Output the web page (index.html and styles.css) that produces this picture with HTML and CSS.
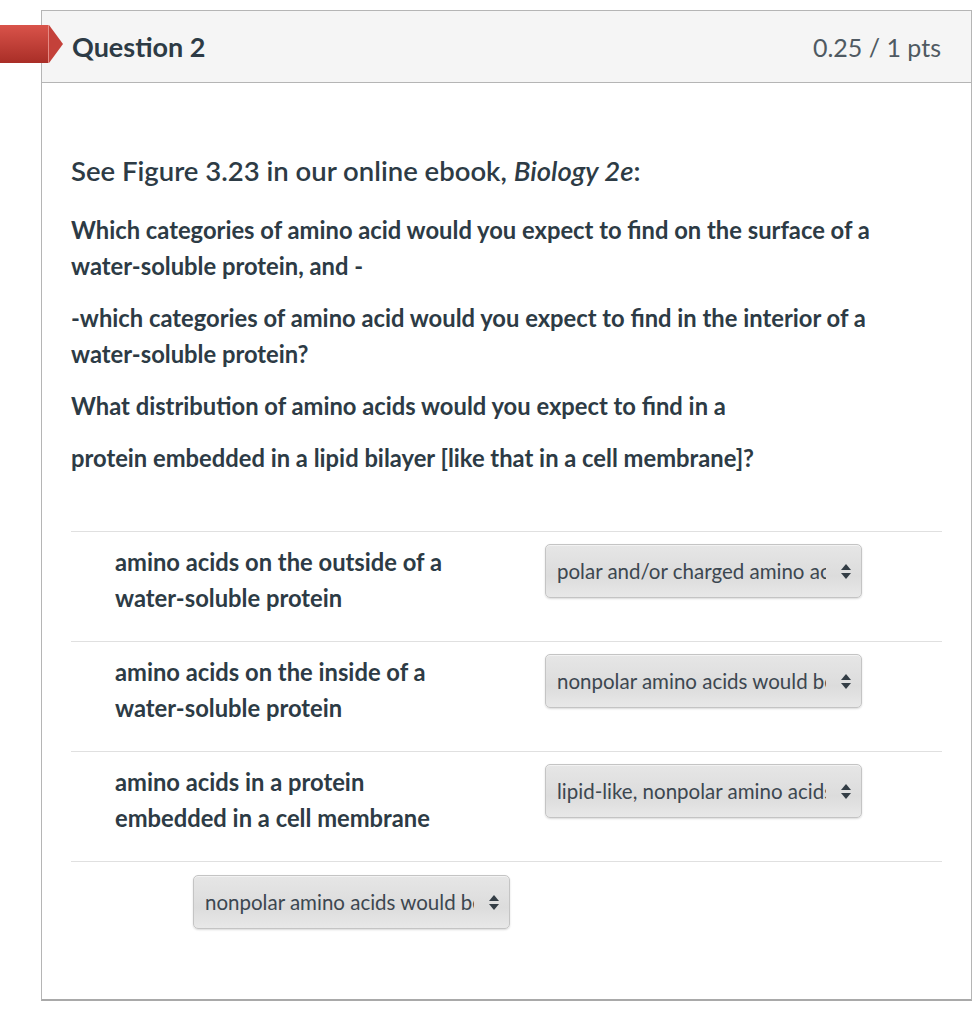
FILE: index.html
```html
<!DOCTYPE html>
<html>
<head>
<meta charset="utf-8">
<link rel="stylesheet" href="styles.css">
</head>
<body>
<div class="page">
  <div class="question">
    <div class="flag"><span class="flag-tip"></span></div>
    <div class="header">
      <span class="title">Question 2</span>
      <span class="points">0.25 / 1 pts</span>
    </div>
    <div class="body">
      <p class="intro">See Figure 3.23 in our online ebook, <em>Biology 2e</em>:</p>
      <p>Which categories of amino acid would you expect to find on the surface of a water-soluble protein, and -</p>
      <p>-which categories of amino acid would you expect to find in the interior of a water-soluble protein?</p>
      <p>What distribution of amino acids would you expect to find in a</p>
      <p>protein embedded in a lipid bilayer [like that in a cell membrane]?</p>

      <div class="matches">
        <div class="match">
          <div class="label">amino acids on the outside of a water-soluble protein</div>
          <div class="select"><span class="sel-text">polar and/or charged amino acids</span><span class="arrows"></span></div>
        </div>
        <div class="match">
          <div class="label">amino acids on the inside of a water-soluble protein</div>
          <div class="select"><span class="sel-text">nonpolar amino acids would be</span><span class="arrows"></span></div>
        </div>
        <div class="match">
          <div class="label">amino acids in a protein embedded in a cell membrane</div>
          <div class="select"><span class="sel-text">lipid-like, nonpolar amino acids</span><span class="arrows"></span></div>
        </div>
      </div>
      <div class="extra">
        <div class="select"><span class="sel-text">nonpolar amino acids would be</span><span class="arrows"></span></div>
      </div>
    </div>
  </div>
</div>
</body>
</html>
```

FILE: styles.css
```css
* { box-sizing: border-box; }
body {
  margin: 0;
  background: #fff;
  font-family: Lato, "Open Sans", sans-serif;
  color: #2d3b45;
}
.page {
  padding: 10px 6px 0 41px;
}
.question {
  position: relative;
  width: 931px;
  height: 991px;
  border: 1px solid #b5b5b5;
  border-bottom: 2px solid #a9a9a9;
  background: #fff;
}
.flag {
  position: absolute;
  left: -42px;
  top: 14px;
  width: 49px;
  height: 38px;
  background: linear-gradient(#d9534a, #a92e27);
  border-right: 1px solid #e58a84;
}
.flag-tip {
  position: absolute;
  left: 49px;
  top: 0;
  width: 0;
  height: 0;
  border-top: 19px solid transparent;
  border-bottom: 19px solid transparent;
  border-left: 14px solid #c4413a;
}
.header {
  height: 72px;
  background: #f5f5f5;
  border-bottom: 1px solid #b5b5b5;
  padding: 0 30px;
  display: flex;
  align-items: center;
  justify-content: space-between;
}
.title {
  font-size: 27px;
  font-weight: 700;
  color: #2d3b45;
}
.points {
  font-size: 25px;
  font-weight: 400;
  color: #4f5a62;
}
.body {
  padding: 70px 29px 0 29px;
}
.body p {
  margin: 0 0 16px 0;
  max-width: 850px;
  font-size: 23.75px;
  font-weight: 700;
  line-height: 36px;
}
.body p.intro {
  font-size: 27.5px;
  font-weight: 600;
  margin-bottom: 23px;
}
.body p.intro em { font-style: italic; }
.matches {
  margin-top: 55px;
  border-top: 1px solid #e0e0e0;
}
.match {
  display: flex;
  align-items: flex-start;
  height: 110px;
  padding: 12px 0 0 44px;
  border-bottom: 1px solid #e0e0e0;
}
.label {
  width: 430px;
  padding-right: 72px;
  font-size: 23.75px;
  font-weight: 700;
  line-height: 36px;
}
.select {
  width: 317px;
  height: 54px;
  border: 1px solid #c4c4c4;
  border-radius: 5px;
  background: linear-gradient(#e6e6e6, #dcdcdc 60%, #e8e8e8);
  box-shadow: inset 0 1px 0 #f2f2f2, 0 1px 2px rgba(0,0,0,0.15);
  display: flex;
  align-items: center;
  padding: 0 10px 0 11px;
  font-size: 20.5px;
  color: #3c4750;
}
.sel-text {
  flex: 1;
  white-space: nowrap;
  overflow: hidden;
  margin-right: 15px;
}
.arrows {
  width: 10px;
  height: 15px;
  position: relative;
}
.arrows::before, .arrows::after {
  content: "";
  position: absolute;
  left: 0;
  border-left: 5px solid transparent;
  border-right: 5px solid transparent;
}
.arrows::before { top: 0; border-bottom: 6px solid #333d45; }
.arrows::after { bottom: 0; border-top: 6px solid #333d45; }
.extra {
  padding: 13px 0 0 122px;
}
```
